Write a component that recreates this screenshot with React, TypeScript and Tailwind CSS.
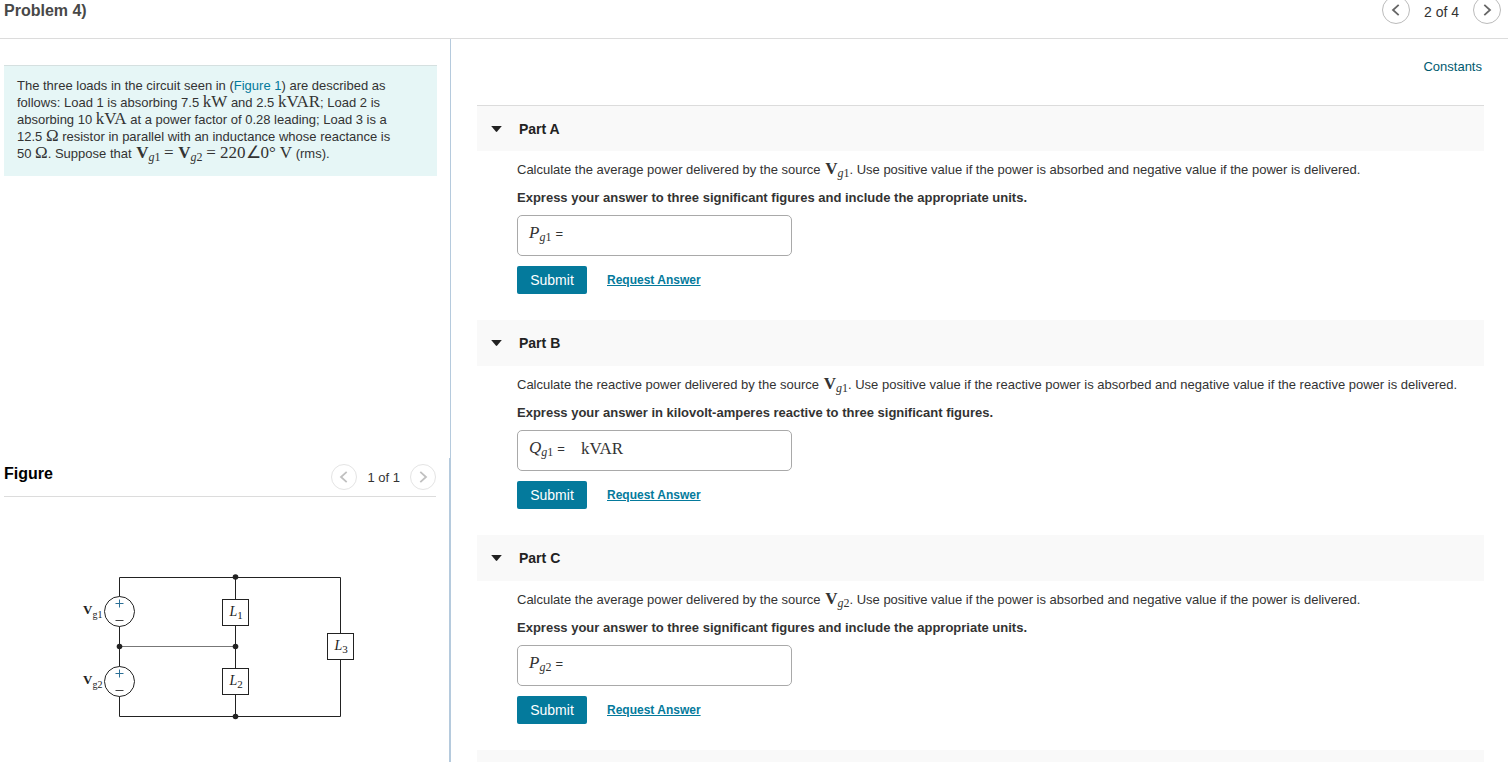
import type { ReactNode } from "react";
import { useState } from "react";

function Math({ children, bold = false }: { children: ReactNode; bold?: boolean }) {
  return (
    <span
      className={
        "whitespace-nowrap font-['Liberation_Serif',serif] text-[17px] leading-0 text-[#333] " +
        (bold ? "ml-px font-bold" : "font-normal")
      }
    >
      {children}
    </span>
  );
}

function Sub({ index }: { index: number }) {
  return (
    <sub className="text-xs font-normal">
      <i>g</i>
      {index}
    </sub>
  );
}

function Chevron({ direction }: { direction: "left" | "right" }) {
  return (
    <svg viewBox="0 0 12 12" className="size-3" fill="none" stroke="currentColor" strokeWidth="1.8">
      <path d={direction === "left" ? "M8.7 0.8 3 6l5.7 5.2" : "M3.3 0.8 9 6l-5.7 5.2"} />
    </svg>
  );
}

type PartProps = {
  name: string;
  first?: boolean;
  question: ReactNode;
  instruction: string;
  symbol: string;
  index: number;
  unit?: string;
};

function Part({ name, first = false, question, instruction, symbol, index, unit }: PartProps) {
  const [open, setOpen] = useState(true);
  const id = "answer-" + name.toLowerCase();
  return (
    <section>
      <h2
        className={
          "flex h-[46px] items-center bg-[#f9f9f9] " + (first ? "border-t border-[#dcdcdc]" : "")
        }
      >
        <button
          type="button"
          aria-expanded={open}
          onClick={() => setOpen(!open)}
          className="flex items-center gap-[17px] pl-3.5 text-sm font-bold text-[#222]"
        >
          <svg viewBox="0 0 11 6" className="h-1.5 w-[11px]" fill="currentColor">
            <path d="M0.2 0h10.6L6.2 5.6q-.7.7-1.4 0z" />
          </svg>
          Part {name}
        </button>
      </h2>
      {open && (
        <div className="pt-[9px] pb-[26px] pl-10">
          <p className="h-5 text-[13px] leading-5 whitespace-nowrap">{question}</p>
          <p className="mt-2 h-5 text-[13px] leading-5 font-bold">{instruction}</p>
          <div className="mt-[7px] flex h-[41px] w-[275px] items-center rounded-[5px] border border-[#a9a9a9] pb-1 pl-[11px]">
            <label htmlFor={id} className="flex items-baseline gap-1 text-[13px]">
              <Math>
                <i>{symbol}</i>
                <Sub index={index} />
              </Math>
              =
            </label>
            <input
              id={id}
              type="text"
              className={"h-6 min-w-0 outline-none " + (unit ? "w-4" : "flex-1 px-2")}
            />
            {unit && <Math>{unit}</Math>}
          </div>
          <div className="mt-2.5 flex items-center gap-5">
            <button
              type="button"
              className="h-7 w-[70px] rounded-xs bg-[#047a9c] text-sm font-normal text-white"
            >
              Submit
            </button>
            <a href="#request" className="text-xs font-bold text-[#047a9c] underline">
              Request Answer
            </a>
          </div>
        </div>
      )}
    </section>
  );
}

function Source({ cy, index }: { cy: number; index: number }) {
  return (
    <g>
      <circle cx="119.5" cy={cy} r="15" fill="#fff" />
      <path d={`M115.5 ${cy - 8}h8M119.5 ${cy - 12}v8`} stroke="#2b6f96" />
      <path d={`M115.5 ${cy + 9}h8`} stroke="#444" />
      <text x="83" y={cy + 2} fontSize="13" fontWeight="bold" fill="#222" stroke="none">
        V
        <tspan fontSize="10" fontWeight="normal" dy="4">
          g{index}
        </tspan>
      </text>
    </g>
  );
}

function Load({ x, y, index }: { x: number; y: number; index: number }) {
  return (
    <g>
      <rect x={x} y={y} width="26" height="26" fill="#fff" />
      <text x={x + 7} y={y + 16} fontSize="14" fontStyle="italic" fill="#222" stroke="none">
        L
        <tspan fontSize="11" fontStyle="normal" dy="3">
          {index}
        </tspan>
      </text>
    </g>
  );
}

function Circuit() {
  return (
    <svg
      viewBox="70 560 300 180"
      className="h-[180px] w-[300px] font-['Liberation_Serif',serif]"
      fill="none"
      stroke="#222"
      role="img"
      aria-label="Circuit"
    >
      <path d="M119.5 716.5v-139h221v139zM235.5 577v139" />
      <path d="M119.5 646.5h116" stroke="#777" />
      <Source cy={611.5} index={1} />
      <Source cy={681.5} index={2} />
      <Load x={222.5} y={599.5} index={1} />
      <Load x={222.5} y={668.5} index={2} />
      <Load x={327.5} y={633.5} index={3} />
      <g fill="#222" stroke="none">
        <circle cx="235.5" cy="577" r="2.8" />
        <circle cx="119.5" cy="646.5" r="2.8" />
        <circle cx="235.5" cy="646.5" r="2.8" />
        <circle cx="235.5" cy="716.5" r="2.8" />
      </g>
    </svg>
  );
}

export default function App() {
  return (
    <div className="flex h-screen flex-col overflow-hidden bg-white font-['Liberation_Sans',Arial,sans-serif] text-[#333]">
      <header className="flex h-[39px] shrink-0 justify-between border-b border-[#dcdcdc] pr-[7px] pl-1">
        <h1 className="text-base leading-[22px] font-bold text-[#484848]">Problem 4)</h1>
        <nav className="flex h-6 items-end gap-3.5" aria-label="Problems">
          <button
            type="button"
            aria-label="Previous problem"
            className="grid size-7 shrink-0 place-items-center rounded-full border border-[#bbb] text-[#666]"
          >
            <Chevron direction="left" />
          </button>
          <span className="text-sm leading-6">2 of 4</span>
          <button
            type="button"
            aria-label="Next problem"
            className="grid size-7 shrink-0 place-items-center rounded-full border border-[#bbb] text-[#666]"
          >
            <Chevron direction="right" />
          </button>
        </nav>
      </header>

      <div className="flex min-h-0 flex-1">
        <aside className="flex w-[451px] shrink-0 flex-col">
          <div className="h-[419px] shrink-0 border-r border-[#b5cadd] pt-[26px] pr-[13px] pl-1">
            <p className="border-t border-[#d5e0e0] bg-[#e6f6f6] pt-[11px] pr-10 pb-3.5 pl-[13px] text-[13px] leading-[17px]">
              The three loads in the circuit seen in (
              <a href="#figure" className="text-[#047a9c]">
                Figure 1
              </a>
              ) are described as follows: Load 1 is absorbing 7.5 <Math>kW</Math> and 2.5{" "}
              <Math>kVAR</Math>; Load 2 is absorbing 10 <Math>kVA</Math> at a power factor of 0.28
              leading; Load 3 is a 12.5 <Math>Ω</Math> resistor in parallel with an inductance whose
              reactance is 50 <Math>Ω</Math>. Suppose that{" "}
              <Math bold>
                V<Sub index={1} />
              </Math>{" "}
              <Math>=</Math>{" "}
              <Math bold>
                V<Sub index={2} />
              </Math>{" "}
              <Math>= 220∠0° V</Math> (rms).
            </p>
          </div>
          <div id="figure" className="flex-1 border-r-2 border-[#b5cadd] pr-[13px] pl-1">
            <div className="flex h-[39px] items-center justify-between border-b border-[#dcdcdc]">
              <h2 className="pb-1.5 text-base font-bold text-black">Figure</h2>
              <nav className="flex items-center gap-2.5" aria-label="Figures">
                <button
                  type="button"
                  disabled
                  aria-label="Previous figure"
                  className="grid size-[26px] place-items-center rounded-full border border-[#e4e4e4] text-[#c0c0c0]"
                >
                  <Chevron direction="left" />
                </button>
                <span className="pt-0.5 text-[13px]">1 of 1</span>
                <button
                  type="button"
                  disabled
                  aria-label="Next figure"
                  className="grid size-[26px] place-items-center rounded-full border border-[#e4e4e4] text-[#c0c0c0]"
                >
                  <Chevron direction="right" />
                </button>
              </nav>
            </div>
            <div className="flex justify-center pt-[63px]">
              <Circuit />
            </div>
          </div>
        </aside>

        <main className="min-w-0 flex-1 overflow-hidden pr-6 pl-[26px]">
          <div className="flex h-[66px] justify-end pt-[18px] pr-0.5">
            <a href="#constants" className="text-[13px] leading-5 text-[#005a70]">
              Constants
            </a>
          </div>
          <Part
            name="A"
            first
            symbol="P"
            index={1}
            question={
              <>
                Calculate the average power delivered by the source{" "}
                <Math bold>
                  V<Sub index={1} />
                </Math>
                . Use positive value if the power is absorbed and negative value if the power is
                delivered.
              </>
            }
            instruction="Express your answer to three significant figures and include the appropriate units."
          />
          <Part
            name="B"
            symbol="Q"
            index={1}
            unit="kVAR"
            question={
              <>
                Calculate the reactive power delivered by the source{" "}
                <Math bold>
                  V<Sub index={1} />
                </Math>
                . Use positive value if the reactive power is absorbed and negative value if the
                reactive power is delivered.
              </>
            }
            instruction="Express your answer in kilovolt-amperes reactive to three significant figures."
          />
          <Part
            name="C"
            symbol="P"
            index={2}
            question={
              <>
                Calculate the average power delivered by the source{" "}
                <Math bold>
                  V<Sub index={2} />
                </Math>
                . Use positive value if the power is absorbed and negative value if the power is
                delivered.
              </>
            }
            instruction="Express your answer to three significant figures and include the appropriate units."
          />
          <div className="h-[46px] bg-[#f9f9f9]" />
        </main>
      </div>
    </div>
  );
}
